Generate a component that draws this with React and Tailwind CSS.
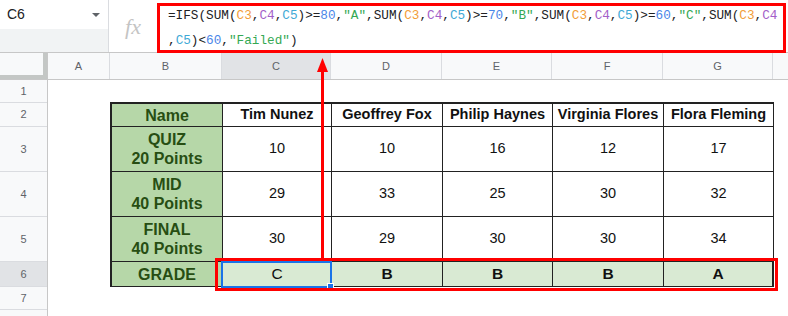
import React from "react";

const cols = [
    { key: "A", w: "w-[62px]" },
    { key: "B", w: "w-[112px]" },
    { key: "C", w: "w-[109px]" },
    { key: "D", w: "w-[111px]" },
    { key: "E", w: "w-[110px]" },
    { key: "F", w: "w-[111px]" },
    { key: "G", w: "w-[110px]" },
];

const rows = [
    { n: 1, h: "h-[23px]" },
    { n: 2, h: "h-[24px]" },
    { n: 3, h: "h-[45px]" },
    { n: 4, h: "h-[45px]" },
    { n: 5, h: "h-[45px]" },
    { n: 6, h: "h-[25px]" },
    { n: 7, h: "h-[23px]" },
];

const names = ["Tim Nunez", "Geoffrey Fox", "Philip Haynes", "Virginia Flores", "Flora Fleming"];

const scoreRows = [
    { label: ["QUIZ", "20 Points"], values: [10, 10, 16, 12, 17] },
    { label: ["MID", "40 Points"], values: [29, 33, 25, 30, 32] },
    { label: ["FINAL", "40 Points"], values: [30, 29, 30, 30, 34] },
];

const grades = ["C", "B", "B", "B", "A"];

const cellW = ["w-[111px]", "w-[109px]", "w-[111px]", "w-[110px]", "w-[111px]", "w-[110px]"];

// coloured pieces of the formula
const Ref = ({ c, children }) => <span className={c}>{children}</span>;
const sumRefs = (
    <>
        SUM(<Ref c="text-[#f29d38]">C3</Ref>,<Ref c="text-[#a35fc9]">C4</Ref>,
        <Ref c="text-[#3fa9d6]">C5</Ref>)
    </>
);

const FormulaBar = () => (
    <div className="flex h-[53px] border-b border-[#c7c7c7] bg-white">
        <div className="w-[109px] flex flex-col border-r border-[#dadce0]">
            <div className="h-[29px] flex items-center justify-between pl-[7px] pr-[8px] bg-white">
                <span className="text-[14px] text-[#202124]">C6</span>
                <span className="w-0 h-0 border-l-[4px] border-r-[4px] border-t-[4px] border-l-transparent border-r-transparent border-t-[#5f6368]"></span>
            </div>
            <div className="flex-1 bg-[#f1f3f4]"></div>
        </div>
        <div className="w-[48px] flex items-center justify-center">
            <span className="text-[22px] italic text-[#c4c4c4]" style={{ fontFamily: '"Liberation Serif", serif' }}>
                fx
            </span>
        </div>
        <div
            className="flex-1 pl-[11px] pt-[3px] text-[12.7px] leading-[25px] text-[#202124] whitespace-pre"
            style={{ fontFamily: '"Liberation Mono", monospace' }}
        >
            <div>
                =IFS({sumRefs}&gt;=<Ref c="text-[#4a86e8]">80</Ref>,<Ref c="text-[#34a853]">"A"</Ref>,{sumRefs}&gt;=
                <Ref c="text-[#4a86e8]">70</Ref>,<Ref c="text-[#34a853]">"B"</Ref>,{sumRefs}&gt;=
                <Ref c="text-[#4a86e8]">60</Ref>,<Ref c="text-[#34a853]">"C"</Ref>,SUM(<Ref c="text-[#f29d38]">C3</Ref>,
                <Ref c="text-[#a35fc9]">C4</Ref>
            </div>
            <div>
                ,<Ref c="text-[#3fa9d6]">C5</Ref>)&lt;<Ref c="text-[#4a86e8]">60</Ref>,
                <Ref c="text-[#34a853]">"Failed"</Ref>)
            </div>
        </div>
    </div>
);

const ColumnHeaders = () => (
    <div className="flex h-[27px] bg-[#f8f9fa] border-b border-[#c7c7c7]">
        <div className="w-[48px] relative border-r border-[#c7c7c7]">
            <div className="absolute right-0 top-0 w-[4px] h-full bg-[#c4c7c5]"></div>
            <div className="absolute left-0 bottom-0 w-full h-[4px] bg-[#c4c7c5]"></div>
        </div>
        {cols.map((c) => (
            <div
                key={c.key}
                className={`${c.w} shrink-0 flex items-center justify-center border-r border-[#dadce0] text-[11px] text-[#5f6368] ${
                    c.key === "C" ? "bg-[#e1e3e6]" : ""
                }`}
            >
                {c.key}
            </div>
        ))}
        <div className="flex-1"></div>
    </div>
);

const RowHeaders = () => (
    <div className="w-[48px] h-[240px] shrink-0 bg-[#f8f9fa] border-r border-[#c7c7c7]">
        {rows.map((r) => (
            <div
                key={r.n}
                className={`${r.h} flex items-center justify-center border-b border-[#dadce0] text-[11px] text-[#5f6368] ${
                    r.n === 6 ? "bg-[#e1e3e6]" : ""
                }`}
            >
                {r.n}
            </div>
        ))}
    </div>
);

const labelCell = "flex flex-col items-center justify-center bg-[#b6d7a8] text-[#274e13] text-[16px] font-bold border-r border-b border-[#222] leading-[19px]";
const dataCell = "flex items-center justify-center border-r border-b border-[#222]";

const GradeTable = () => (
    <div className="ml-[62px] w-max border-l-2 border-t-2 border-[#222] text-[14.5px] text-[#111]">
        <div className="flex h-[23px]">
            <div className={`${cellW[0]} ${labelCell}`}>Name</div>
            {names.map((n, i) => (
                <div key={n} className={`${cellW[i + 1]} ${dataCell} font-bold`}>
                    {n}
                </div>
            ))}
        </div>
        {scoreRows.map((r) => (
            <div key={r.label[0]} className="flex h-[45px]">
                <div className={`${cellW[0]} ${labelCell}`}>
                    <span>{r.label[0]}</span>
                    <span>{r.label[1]}</span>
                </div>
                {r.values.map((v, i) => (
                    <div key={i} className={`${cellW[i + 1]} ${dataCell}`}>
                        {v}
                    </div>
                ))}
            </div>
        ))}
        <div className="flex h-[25px]">
            <div className={`${cellW[0]} ${labelCell}`}>GRADE</div>
            {grades.map((g, i) => (
                <div
                    key={i}
                    className={`${cellW[i + 1]} ${dataCell} bg-[#d9ead3] text-[15.5px] ${i === 0 ? "" : "font-bold"} ${
                        i === 4 ? "border-r-2" : ""
                    }`}
                >
                    {g}
                </div>
            ))}
        </div>
    </div>
);

const App = () => {
    return (
        <div
            className="relative w-[788px] h-[316px] overflow-hidden bg-white"
            style={{ fontFamily: '"Liberation Sans", Arial, sans-serif' }}
        >
            <FormulaBar />
            <ColumnHeaders />
            <div className="flex">
                <RowHeaders />
                <div className="flex-1">
                    <div className="h-[22px]"></div>
                    <GradeTable />
                </div>
            </div>

            {/* selected cell C6 */}
            <div className="absolute left-[221px] top-[261px] w-[111px] h-[27px] border-2 border-[#1a73e8]"></div>
            <div className="absolute left-[327px] top-[283px] w-[7px] h-[7px] bg-[#1a73e8] border border-white"></div>

            {/* red annotations */}
            <div className="absolute left-[157px] top-[3px] w-[629px] h-[50px] border-[3px] border-[#ff0000]"></div>
            <div className="absolute left-[215px] top-[258px] w-[563px] h-[33px] border-[3px] border-[#ff0000]"></div>
            <div className="absolute left-[321px] top-[70px] w-[3px] h-[189px] bg-[#ff0000]"></div>
            <svg className="absolute left-[317px] top-[58px]" width="11" height="14" viewBox="0 0 11 14">
                <polygon points="5.5,0 11,14 0,14" fill="#ff0000" />
            </svg>
        </div>
    );
};

export default App;
